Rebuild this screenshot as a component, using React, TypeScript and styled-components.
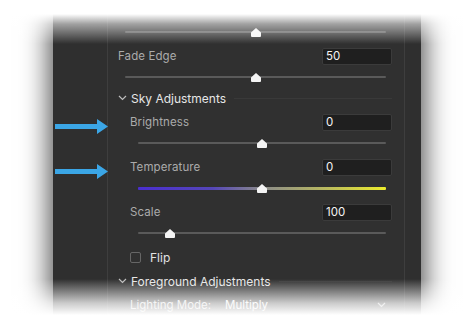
import React from 'react';
import styled, { createGlobalStyle } from 'styled-components';

const GlobalStyle = createGlobalStyle`
  html, body {
    margin: 0;
    padding: 0;
    background: #ffffff;
  }
  body {
    font-family: Inter, 'Liberation Sans', sans-serif;
    -webkit-font-smoothing: antialiased;
  }
`;

const Stage = styled.div`
  position: relative;
  width: 474px;
  height: 325px;
  overflow: hidden;
  padding-left: 53px;
  box-sizing: border-box;
  background: #ffffff;
`;

const Panel = styled.div`
  width: 368px;
  height: 325px;
  display: grid;
  grid-template-columns: 54px 1fr 16px;
  background: #303030;
  box-shadow: 0 0 26px 3px rgba(0, 0, 0, 0.72);
`;

const SideColumn = styled.div`
  background: #2f2f2f;
`;

const Content = styled.div`
  border-left: 1px solid #3e3e3e;
  border-right: 1px solid #3e3e3e;
  padding-top: 21px;
  display: flex;
  flex-direction: column;
`;

const FieldRow = styled.div<{ $indent: number }>`
  height: 20px;
  display: flex;
  align-items: center;
  justify-content: space-between;
  padding-left: ${(p) => p.$indent}px;
  padding-right: 12px;
`;

const Label = styled.span`
  font-size: 11.5px;
  color: #ababab;
  letter-spacing: 0.1px;
`;

const ValueBox = styled.div`
  width: 70px;
  height: 17px;
  box-sizing: border-box;
  background: #1f1f1f;
  border: 1px solid #3b3b3b;
  border-radius: 2px;
  padding-left: 3px;
  font-size: 11.5px;
  line-height: 15px;
  color: #f4f4f4;
`;

const SliderRow = styled.div<{ $indent: number }>`
  height: 25px;
  padding-left: ${(p) => p.$indent}px;
  padding-right: 18px;
`;

const TrackWrap = styled.div`
  position: relative;
  margin-top: 10px;
`;

const Track = styled.div<{ $gradient?: boolean }>`
  height: ${(p) => (p.$gradient ? 3 : 2)}px;
  border-radius: 1px;
  background: ${(p) =>
    p.$gradient
      ? 'linear-gradient(to right, #4a2ed0 0%, #5546b8 30%, #8a8a8a 50%, #b8b860 75%, #ecec2c 100%)'
      : '#5a5a5a'};
`;

const ThumbShape = styled.svg`
  position: absolute;
  top: -3px;
  transform: translateX(-50%);
  display: block;
`;

const Heading = styled.div<{ $shift: number }>`
  height: 18px;
  margin-top: ${(p) => p.$shift}px;
  margin-bottom: 5px;
  display: flex;
  align-items: center;
  gap: 4px;
  padding-left: 10px;
  padding-right: 12px;
`;

const HeadingText = styled.span`
  font-size: 12px;
  color: #e6e6e6;
  white-space: nowrap;
`;

const Divider = styled.div`
  flex: 1;
  height: 1px;
  margin-left: 4px;
  background: #393939;
`;

const CheckRow = styled.div`
  height: 20px;
  margin-bottom: 5px;
  display: flex;
  align-items: center;
  gap: 9px;
  padding-left: 22px;
`;

const CheckBox = styled.div`
  width: 11px;
  height: 11px;
  border: 1px solid #666666;
  border-radius: 2px;
  box-sizing: border-box;
`;

const CheckLabel = styled.span`
  font-size: 12px;
  color: #e2e2e2;
`;

const ModeRow = styled.div`
  height: 20px;
  display: flex;
  align-items: center;
  padding-left: 22px;
  padding-right: 18px;
`;

const ModeLabel = styled.span`
  width: 95px;
  font-size: 11.5px;
  color: #d8d8d8;
`;

const ModeValue = styled.span`
  flex: 1;
  font-size: 11.5px;
  color: #f0f0f0;
`;

const TopFade = styled.div`
  position: absolute;
  left: 0;
  right: 0;
  top: 0;
  height: 44px;
  background: linear-gradient(to bottom, #ffffff 0px, #ffffff 14px, rgba(255, 255, 255, 0.55) 24px, rgba(255, 255, 255, 0) 44px);
  pointer-events: none;
`;

const BottomFade = styled.div`
  position: absolute;
  left: 0;
  right: 0;
  bottom: 0;
  height: 46px;
  background: linear-gradient(to top, #ffffff 0px, #ffffff 10px, rgba(255, 255, 255, 0.75) 22px, rgba(255, 255, 255, 0) 46px);
  pointer-events: none;
`;

const Arrow = styled.svg<{ $top: number }>`
  position: absolute;
  left: 55px;
  top: ${(p) => p.$top}px;
  display: block;
`;

const Thumb = ({ pct }: { pct: number }) => (
  <ThumbShape width="10" height="9" viewBox="0 0 10 9" style={{ left: `${pct}%` }}>
    <path d="M5 0 L10 4.5 L10 8 Q10 9 9 9 L1 9 Q0 9 0 8 L0 4.5 Z" fill="#f4f4f4" />
  </ThumbShape>
);

const Chevron = () => (
  <svg width="9" height="6" viewBox="0 0 9 6">
    <polyline points="1,1 4.5,4.5 8,1" fill="none" stroke="#bdbdbd" strokeWidth="1.2" />
  </svg>
);

const Slider = ({ indent, pct, gradient }: { indent: number; pct: number; gradient?: boolean }) => (
  <SliderRow $indent={indent}>
    <TrackWrap>
      <Track $gradient={gradient} />
      <Thumb pct={pct} />
    </TrackWrap>
  </SliderRow>
);

const Field = ({ indent, label, value }: { indent: number; label: string; value: string }) => (
  <FieldRow $indent={indent}>
    <Label>{label}</Label>
    <ValueBox>{value}</ValueBox>
  </FieldRow>
);

const BlueArrow = ({ top }: { top: number }) => (
  <Arrow $top={top} width="54" height="15" viewBox="0 0 54 15">
    <path d="M0 5 L42 5 L42 0 L53 7.5 L42 15 L42 10 L0 10 Z" fill="#3ba6e6" />
  </Arrow>
);

const skyFields = [
  { label: 'Brightness', value: '0', pct: 50, gradient: false },
  { label: 'Temperature', value: '0', pct: 50, gradient: true },
  { label: 'Scale', value: '100', pct: 13, gradient: false }
];

export default function App() {
  return (
    <>
      <GlobalStyle />
      <Stage>
        <Panel>
          <SideColumn />
          <Content>
            <Slider indent={17} pct={50} />
            <Field indent={10} label="Fade Edge" value="50" />
            <Slider indent={17} pct={50} />

            <Heading $shift={-2}>
              <Chevron />
              <HeadingText>Sky Adjustments</HeadingText>
              <Divider />
            </Heading>

            {skyFields.map((f) => (
              <React.Fragment key={f.label}>
                <Field indent={22} label={f.label} value={f.value} />
                <Slider indent={30} pct={f.pct} gradient={f.gradient} />
              </React.Fragment>
            ))}

            <CheckRow>
              <CheckBox />
              <CheckLabel>Flip</CheckLabel>
            </CheckRow>

            <Heading $shift={0}>
              <Chevron />
              <HeadingText>Foreground Adjustments</HeadingText>
              <Divider />
            </Heading>

            <ModeRow>
              <ModeLabel>Lighting Mode:</ModeLabel>
              <ModeValue>Multiply</ModeValue>
              <Chevron />
            </ModeRow>
          </Content>
          <SideColumn />
        </Panel>
        <BlueArrow top={119} />
        <BlueArrow top={164} />
        <TopFade />
        <BottomFade />
      </Stage>
    </>
  );
}
